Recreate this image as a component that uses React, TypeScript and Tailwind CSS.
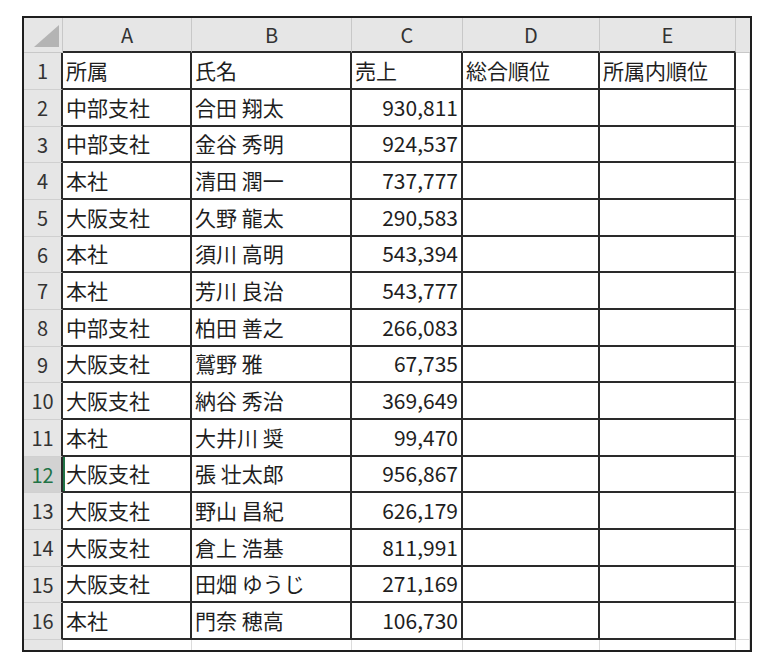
import React from "react";

const rows: [string, string, string][] = [
  ["中部支社", "合田 翔太", "930,811"],
  ["中部支社", "金谷 秀明", "924,537"],
  ["本社", "清田 潤一", "737,777"],
  ["大阪支社", "久野 龍太", "290,583"],
  ["本社", "須川 高明", "543,394"],
  ["本社", "芳川 良治", "543,777"],
  ["中部支社", "柏田 善之", "266,083"],
  ["大阪支社", "鷲野 雅", "67,735"],
  ["大阪支社", "納谷 秀治", "369,649"],
  ["本社", "大井川 奨", "99,470"],
  ["大阪支社", "張 壮太郎", "956,867"],
  ["大阪支社", "野山 昌紀", "626,179"],
  ["大阪支社", "倉上 浩基", "811,991"],
  ["大阪支社", "田畑 ゆうじ", "271,169"],
  ["本社", "門奈 穂高", "106,730"],
];

const font = { fontFamily: '"Noto Sans CJK JP", "Noto Sans", sans-serif' };

function Row({
  n,
  cells,
  h,
  selected,
}: {
  n: number;
  cells: { text: string; right?: boolean }[];
  h: string;
  selected?: boolean;
}) {
  return (
    <>
      <div
        className={`${h} flex items-center justify-center border-b border-b-[#d0d0d0] border-r-2 border-r-[#2a2a2a] text-[20px] ${
          selected ? "bg-[#d2d2d2] text-[#217346]" : "bg-[#e6e6e6] text-[#333333]"
        }`}
      >
        {n}
      </div>
      {cells.map((c, i) => (
        <div
          key={i}
          className={`${h} flex items-center border-b-2 border-r-2 border-[#2a2a2a] text-[21px] text-[#1e1e1e] whitespace-nowrap overflow-hidden ${
            c.right ? "justify-end pr-[3px]" : "pl-[3px]"
          } ${selected && i === 0 ? "shadow-[inset_2px_0_0_#217346]" : ""}`}
        >
          {c.text}
        </div>
      ))}
      <div className={`${h} border-b border-r border-[#dcdcdc]`}></div>
    </>
  );
}

export default function App() {
  const rowH = (i: number) => (i % 3 === 2 ? "h-[36px]" : "h-[37px]");
  return (
    <div className="w-[768px] h-[671px] bg-white pl-[22px] pt-[16px]" style={font}>
      <div className="w-[730px] h-[636px] border-2 border-[#1e1e1e] overflow-hidden bg-white">
        <div className="grid grid-cols-[39px_129px_160px_111px_137px_136px_1fr]">
          {/* header row */}
          <div className="h-[35px] bg-[#e6e6e6] border-r border-b border-[#c8c8c8] relative">
            <svg className="absolute left-[10px] top-[7px]" width="25" height="22" viewBox="0 0 25 22">
              <polygon points="25,0 25,22 0,22" fill="#b4b4b4" />
            </svg>
          </div>
          {["A", "B", "C", "D", "E"].map((l) => (
            <div
              key={l}
              className="h-[35px] bg-[#e6e6e6] border-r border-r-[#c8c8c8] border-b-2 border-b-[#2a2a2a] flex items-center justify-center text-[20px] text-[#333333]"
            >
              {l}
            </div>
          ))}
          <div className="h-[35px] bg-[#e6e6e6] border-b border-[#c8c8c8]"></div>

          <Row
            n={1}
            h="h-[37px]"
            cells={[
              { text: "所属" },
              { text: "氏名" },
              { text: "売上" },
              { text: "総合順位" },
              { text: "所属内順位" },
            ]}
          />
          {rows.map((r, i) => (
            <Row
              key={i}
              n={i + 2}
              h={rowH(i + 1)}
              selected={i + 2 === 12}
              cells={[{ text: r[0] }, { text: r[1] }, { text: r[2], right: true }, { text: "" }, { text: "" }]}
            />
          ))}
          {/* row 17 partial */}
          <div className="h-[37px] bg-[#e6e6e6] border-r border-[#c8c8c8] flex items-center justify-center text-[20px] text-[#333333]">
            17
          </div>
          {[0, 1, 2, 3, 4, 5].map((i) => (
            <div key={i} className="h-[37px] border-r border-[#dcdcdc]"></div>
          ))}
        </div>
      </div>
    </div>
  );
}
